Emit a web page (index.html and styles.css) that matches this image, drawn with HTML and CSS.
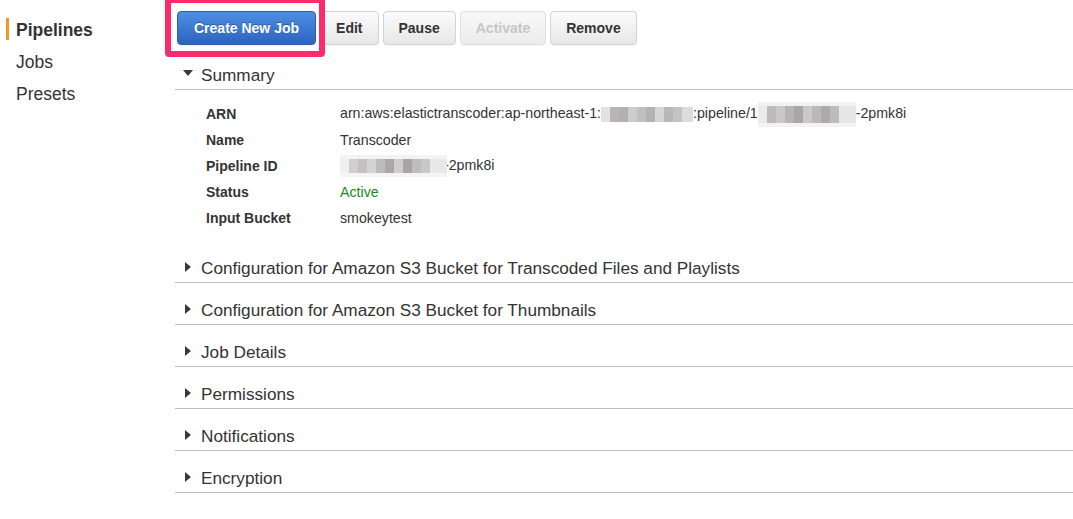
FILE: index.html
```html
<!DOCTYPE html>
<html>
<head>
<meta charset="utf-8">
<link rel="stylesheet" href="styles.css">
</head>
<body>
<div class="page">
  <nav class="sidebar">
    <div class="nav-item active">Pipelines</div>
    <div class="nav-item">Jobs</div>
    <div class="nav-item">Presets</div>
  </nav>
  <main class="main">
    <div class="toolbar">
      <button class="btn btn-primary">Create New Job</button>
      <button class="btn">Edit</button>
      <button class="btn">Pause</button>
      <button class="btn btn-disabled">Activate</button>
      <button class="btn">Remove</button>
    </div>

    <section class="section">
      <div class="section-head"><span class="caret caret-down"></span><span class="head-title">Summary</span></div>
      <div class="summary">
        <div class="lbl">ARN</div>
        <div class="val">arn:aws:elastictranscoder:ap-northeast-1:<span class="redact r1"></span>:pipeline/1<span class="redact r2"></span>-2pmk8i</div>
        <div class="lbl">Name</div>
        <div class="val">Transcoder</div>
        <div class="lbl">Pipeline ID</div>
        <div class="val"><span class="redact r3"></span>-2pmk8i</div>
        <div class="lbl">Status</div>
        <div class="val active">Active</div>
        <div class="lbl">Input Bucket</div>
        <div class="val">smokeytest</div>
      </div>
    </section>

    <section class="section"><div class="section-head"><span class="caret caret-right"></span><span class="head-title">Configuration for Amazon S3 Bucket for Transcoded Files and Playlists</span></div></section>
    <section class="section"><div class="section-head"><span class="caret caret-right"></span><span class="head-title">Configuration for Amazon S3 Bucket for Thumbnails</span></div></section>
    <section class="section"><div class="section-head"><span class="caret caret-right"></span><span class="head-title">Job Details</span></div></section>
    <section class="section"><div class="section-head"><span class="caret caret-right"></span><span class="head-title">Permissions</span></div></section>
    <section class="section"><div class="section-head"><span class="caret caret-right"></span><span class="head-title">Notifications</span></div></section>
    <section class="section"><div class="section-head"><span class="caret caret-right"></span><span class="head-title">Encryption</span></div></section>
  </main>
  <div class="highlight"></div>
</div>
</body>
</html>
```

FILE: styles.css
```css
* { box-sizing: border-box; }
html, body { margin: 0; padding: 0; background: #fff; }
body {
  font-family: "Liberation Sans", Arial, Helvetica, sans-serif;
  color: #333;
  width: 1073px;
  height: 519px;
  overflow: hidden;
}
.page {
  position: relative;
  display: flex;
  width: 1073px;
}
.sidebar {
  width: 175px;
  flex: none;
  padding: 18px 0 0 6px;
}
.nav-item {
  font-size: 17.5px;
  line-height: 24px;
  height: 22px;
  margin-bottom: 10px;
  padding-left: 10px;
  color: #333;
}
.nav-item.active {
  font-weight: bold;
  border-left: 3px solid #f7981d;
  padding-left: 7px;
}
.main {
  flex: 1;
  padding-top: 11px;
}
.toolbar {
  display: flex;
  gap: 4px;
  padding-left: 2px;
  margin-bottom: 3px;
}
.btn {
  height: 34px;
  padding: 0 15px;
  white-space: nowrap;
  font-family: "Liberation Sans", Arial, sans-serif;
  font-size: 14px;
  font-weight: bold;
  color: #333;
  background: linear-gradient(#fbfbfb, #e7e7e7);
  border: 1px solid #d3d3d3;
  border-radius: 4px;
  box-shadow: 0 1px 0 rgba(0,0,0,0.04);
}
.btn-primary {
  padding: 0 16px;
  color: #fff;
  background: linear-gradient(#4d8fe2, #2d63c1);
  border-color: #2f5dab;
  text-shadow: 0 -1px 0 rgba(0,0,0,0.3);
}
.btn-disabled {
  color: #c6c6c6;
  background: linear-gradient(#f8f8f8, #ececec);
  border-color: #e0e0e0;
}
.highlight {
  position: absolute;
  left: 165px;
  top: -3px;
  width: 160px;
  height: 60px;
  border: 6px solid #fe2b6c;
  border-radius: 4px;
  pointer-events: none;
}
.section-head {
  display: flex;
  align-items: center;
  height: 42px;
  padding-top: 11px;
  border-bottom: 1px solid #bcbcbc;
}
.caret { width: 26px; flex: none; height: 10px; position: relative; }
.caret::before {
  content: "";
  position: absolute;
  width: 0;
  height: 0;
}
.caret-down::before {
  left: 8px;
  top: 1px;
  border-left: 5px solid transparent;
  border-right: 5px solid transparent;
  border-top: 6px solid #3a3a3a;
}
.caret-right::before {
  left: 10px;
  top: 0;
  border-top: 5px solid transparent;
  border-bottom: 5px solid transparent;
  border-left: 6px solid #3a3a3a;
}
.head-title {
  font-size: 17.2px;
  line-height: 22px;
  padding-top: 1px;
  color: #333;
}
.summary {
  display: grid;
  grid-template-columns: 134px 1fr;
  grid-auto-rows: 26px;
  align-items: center;
  padding: 11px 0 10px 31px;
  font-size: 14px;
}
.lbl { font-weight: bold; color: #333; }
.val { color: #333; white-space: nowrap; font-size: 14.2px; }
.val.active { color: #1c8a1c; }
.redact {
  display: inline-block;
  vertical-align: middle;
}
.r1 {
  width: 92px;
  height: 15px;
  background: linear-gradient(90deg, #e3e1e1 0 9px, #b9b5b5 9px 18px, #b3b0b0 18px 27px, #cfcccc 27px 36px, #c2bfbf 36px 45px, #b5b2b2 45px 54px, #d6d4d4 54px 63px, #bab7b7 63px 72px, #c4c2c2 72px 81px, #dddbdb 81px 92px);
}
.r2 {
  width: 98px;
  height: 25px;
  background:
    linear-gradient(#f1f1f1 0 4px, transparent 4px 21px, #f3f3f3 21px),
    linear-gradient(90deg, #ebebeb 0 9px, #bcbaba 9px 18px, #c9c7c7 18px 27px, #b6b4b4 27px 36px, #a8a6a6 36px 45px, #cac8c8 45px 54px, #bcb8b8 54px 63px, #acaaaa 63px 72px, #bdbbbb 72px 81px, #e6e6e6 81px 98px);
}
.r3 {
  width: 107px;
  height: 22px;
  margin-right: -3px;
  position: relative;
  background:
    linear-gradient(#f3f3f3 0 4px, transparent 4px 18px, #f4f4f4 18px),
    linear-gradient(90deg, #f0f0f0 0 9px, #d0cfcf 9px 18px, #c2c0c0 18px 27px, #d4d3d3 27px 36px, #bdbbbb 36px 45px, #a9a7a7 45px 54px, #cfcece 54px 63px, #a6a4a4 63px 72px, #bebcbc 72px 81px, #c9c8c8 81px 90px, #e8e8e8 90px 107px);
}
```
